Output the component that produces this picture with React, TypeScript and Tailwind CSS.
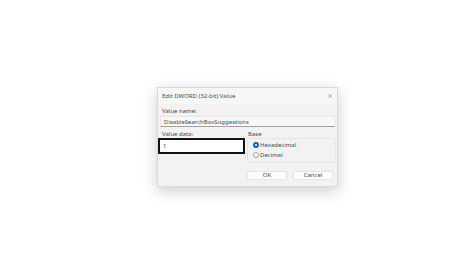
import { X } from 'lucide-react';

const font = { fontFamily: '"Noto Sans", "Open Sans", sans-serif' };

const Radio = ({ checked, label }: { checked?: boolean; label: string }) => (
  <div className="flex items-center gap-[1px] h-[10px]">
    {checked ? (
      <span className="w-[6px] h-[6px] rounded-full bg-[#0d5fb8] flex items-center justify-center">
        <span className="w-[2px] h-[2px] rounded-full bg-white" />
      </span>
    ) : (
      <span className="w-[6px] h-[6px] rounded-full border border-[#a0a0a0] bg-[#f8f8f8]" />
    )}
    <span>{label}</span>
  </div>
);

export default function App() {
  return (
    <div className="w-[474px] h-[253px] bg-white pl-[157px] pt-[87px]" style={font}>
      <div className="w-[181px] h-[100px] bg-[#f2f2f2] border border-[#dadada] shadow-[0_4px_14px_rgba(0,0,0,0.2)] flex flex-col text-[6px] leading-[8px] text-[#4a4a4a]">
        <div className="h-[16px] flex items-center justify-between pl-[4px] pr-[4px] bg-[#f6f6f6]">
          <span>Edit DWORD (32-bit) Value</span>
          <X size={6} strokeWidth={2} className="text-[#666]" />
        </div>

        <div className="mt-[3px] pl-[4px] h-[8px]">Value name:</div>
        <div className="mt-[1px] mx-[2px] h-[11px] bg-[#f8f8f8] border border-[#e8e8e8] border-b-[#a0a0a0] pl-[3px] flex items-center">
          DisableSearchBoxSuggestions
        </div>

        <div className="mt-[3px] flex">
          <div className="w-[87px] flex flex-col">
            <div className="pl-[4px] h-[8px]">Value data:</div>
            <div className="h-[16px] bg-white border-2 border-[#111] pl-[3px] flex items-center">1</div>
          </div>
          <div className="ml-[2px] flex flex-col">
            <div className="pl-[1px] h-[8px]">Base</div>
            <div className="w-[89px] h-[25px] border border-[#e6e6e6] rounded-[2px] pl-[5px] pt-[1px] flex flex-col">
              <Radio checked label="Hexadecimal" />
              <Radio label="Decimal" />
            </div>
          </div>
        </div>

        <div className="mt-[8px] flex justify-end gap-[6px] pr-[4px]">
          <button className="w-[40px] h-[9px] bg-[#fdfdfd] border border-[#e4e4e4] rounded-[2px] text-[6px] leading-[7px]">OK</button>
          <button className="w-[40px] h-[9px] bg-[#fdfdfd] border border-[#e4e4e4] rounded-[2px] text-[6px] leading-[7px]">Cancel</button>
        </div>
      </div>
    </div>
  );
}
